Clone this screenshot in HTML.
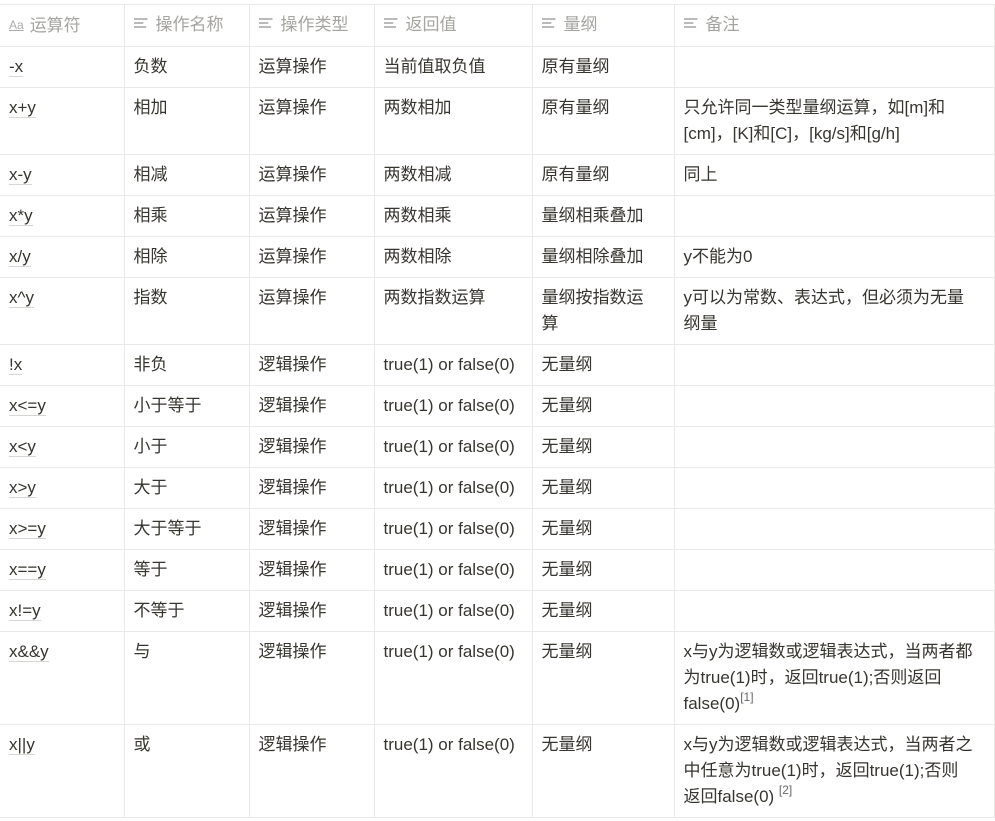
<!DOCTYPE html>
<html><head><meta charset="utf-8"><style>
html,body{margin:0;padding:0;background:#fff;}
body{width:995px;height:821px;overflow:hidden;font-family:"Liberation Sans","Noto Sans CJK SC",sans-serif;font-size:17px;color:#37352f;}
table{position:absolute;left:0;top:4px;border-collapse:collapse;table-layout:fixed;width:994px;}
td,th{border:1px solid #e9e9e7;padding:7px 9px 7px 9px;line-height:26px;vertical-align:top;text-align:left;font-weight:normal;white-space:nowrap;overflow:hidden;box-sizing:content-box;}
td,th{height:26px;}
td.l2{height:52px;}
td.l3{height:78px;}
tr td:first-child,tr th:first-child{border-left:none;}
th{color:#a5a4a0;}
.u{border-bottom:1px solid #d6d6d3;}
.ic{display:inline-block;width:14px;height:10px;margin-right:8px;vertical-align:2px;background:linear-gradient(#bbb 0 2px,transparent 2px 4px,#bbb 4px 6px,transparent 6px 8px,#bbb 8px 10px);clip-path:polygon(0 0,100% 0,100% 20%,0 20%,0 40%,70% 40%,70% 60%,0 60%,0 80%,90% 80%,90% 100%,0 100%);}
.aa{font-size:12px;color:#aaa;text-decoration:underline;margin-right:6px;vertical-align:2px;}
sup{font-size:12px;color:#666;vertical-align:8px;line-height:0;}
</style></head><body>
<table>
<colgroup><col style="width:124px"><col style="width:125px"><col style="width:125px"><col style="width:158px"><col style="width:142px"><col style="width:320px"></colgroup>
<tr><th><span class="aa">Aa</span>运算符</th><th><span class="ic"></span>操作名称</th><th><span class="ic"></span>操作类型</th><th><span class="ic"></span>返回值</th><th><span class="ic"></span>量纲</th><th><span class="ic"></span>备注</th></tr>
<tr><td><span class="u">-x</span></td><td>负数</td><td>运算操作</td><td>当前值取负值</td><td>原有量纲</td><td></td></tr>
<tr><td class="l2"><span class="u">x+y</span></td><td>相加</td><td>运算操作</td><td>两数相加</td><td>原有量纲</td><td>只允许同一类型量纲运算，如[m]和<br>[cm]，[K]和[C]，[kg/s]和[g/h]</td></tr>
<tr><td><span class="u">x-y</span></td><td>相减</td><td>运算操作</td><td>两数相减</td><td>原有量纲</td><td>同上</td></tr>
<tr><td><span class="u">x*y</span></td><td>相乘</td><td>运算操作</td><td>两数相乘</td><td>量纲相乘叠加</td><td></td></tr>
<tr><td><span class="u">x/y</span></td><td>相除</td><td>运算操作</td><td>两数相除</td><td>量纲相除叠加</td><td>y不能为0</td></tr>
<tr><td class="l2"><span class="u">x^y</span></td><td>指数</td><td>运算操作</td><td>两数指数运算</td><td>量纲按指数运<br>算</td><td>y可以为常数、表达式，但必须为无量<br>纲量</td></tr>
<tr><td><span class="u">!x</span></td><td>非负</td><td>逻辑操作</td><td>true(1) or false(0)</td><td>无量纲</td><td></td></tr>
<tr><td><span class="u">x&lt;=y</span></td><td>小于等于</td><td>逻辑操作</td><td>true(1) or false(0)</td><td>无量纲</td><td></td></tr>
<tr><td><span class="u">x&lt;y</span></td><td>小于</td><td>逻辑操作</td><td>true(1) or false(0)</td><td>无量纲</td><td></td></tr>
<tr><td><span class="u">x&gt;y</span></td><td>大于</td><td>逻辑操作</td><td>true(1) or false(0)</td><td>无量纲</td><td></td></tr>
<tr><td><span class="u">x&gt;=y</span></td><td>大于等于</td><td>逻辑操作</td><td>true(1) or false(0)</td><td>无量纲</td><td></td></tr>
<tr><td><span class="u">x==y</span></td><td>等于</td><td>逻辑操作</td><td>true(1) or false(0)</td><td>无量纲</td><td></td></tr>
<tr><td><span class="u">x!=y</span></td><td>不等于</td><td>逻辑操作</td><td>true(1) or false(0)</td><td>无量纲</td><td></td></tr>
<tr><td class="l3"><span class="u">x&amp;&amp;y</span></td><td>与</td><td>逻辑操作</td><td>true(1) or false(0)</td><td>无量纲</td><td>x与y为逻辑数或逻辑表达式，当两者都<br>为true(1)时，返回true(1);否则返回<br>false(0)<sup>[1]</sup></td></tr>
<tr><td class="l3"><span class="u">x||y</span></td><td>或</td><td>逻辑操作</td><td>true(1) or false(0)</td><td>无量纲</td><td>x与y为逻辑数或逻辑表达式，当两者之<br>中任意为true(1)时，返回true(1);否则<br>返回false(0) <sup>[2]</sup></td></tr>
</table>
</body></html>
